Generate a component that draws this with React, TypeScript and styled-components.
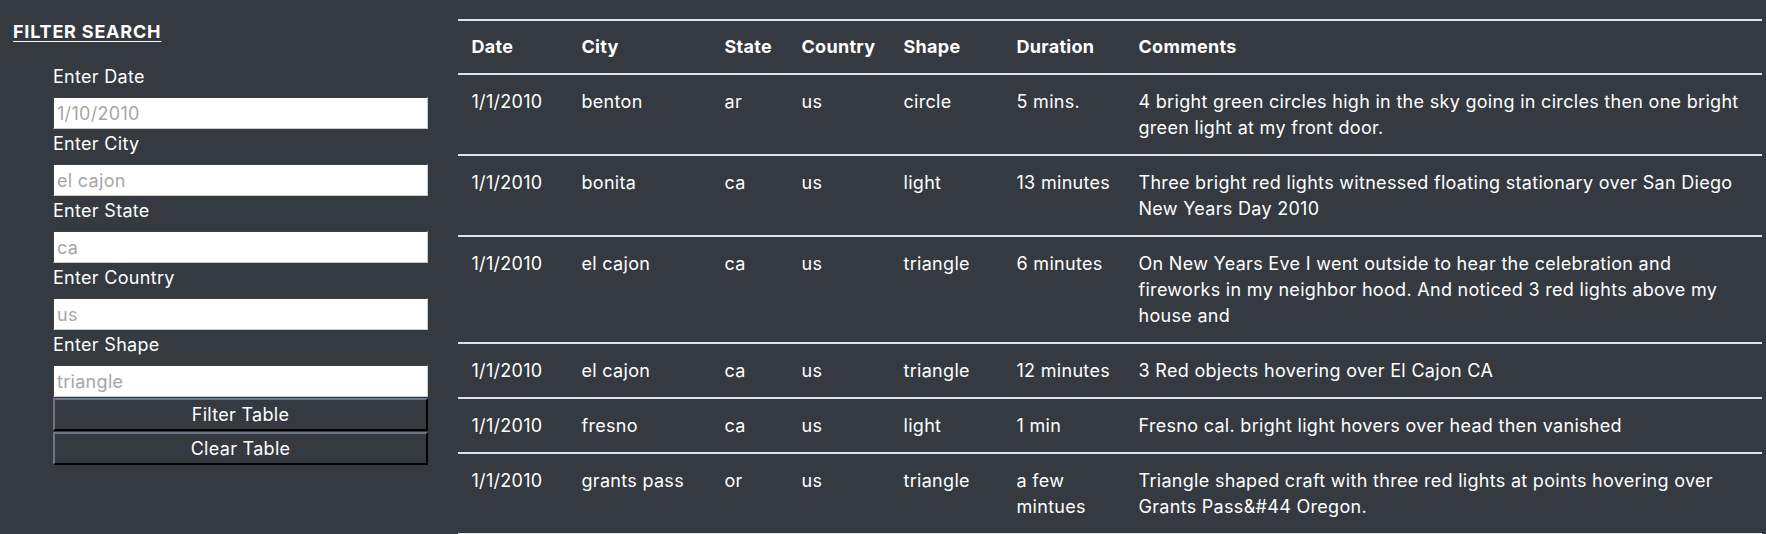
import React from "react";
import styled, { createGlobalStyle } from "styled-components";

const GlobalStyle = createGlobalStyle`
  html, body {
    margin: 0;
    padding: 0;
    background: #343a40;
  }
  body {
    font-family: Inter, "Liberation Sans", sans-serif;
    font-size: 18px;
    line-height: 27px;
    letter-spacing: 0.3px;
    color: #fff;
  }
`;

const Page = styled.div`
  display: grid;
  grid-template-columns: 441px 1fr;
  min-height: 534px;
  background: #343a40;
`;

const Sidebar = styled.aside`
  padding: 18px 0 0 13px;
`;

const Title = styled.h4`
  margin: 0;
  font-size: 18px;
  line-height: 27px;
  font-weight: 700;
  letter-spacing: 0.8px;
  text-decoration: underline;
  text-underline-offset: 3px;
`;

const Form = styled.form`
  margin: 18px 0 0 40px;
  width: 375px;
`;

const Label = styled.label`
  display: block;
  line-height: 27px;
  margin-bottom: 7px;
`;

const Input = styled.input`
  display: block;
  box-sizing: border-box;
  width: 100%;
  height: 32px;
  margin: 0 0 1px;
  padding: 1px 3px;
  font-family: inherit;
  font-size: 18px;
  letter-spacing: 0.3px;
  color: #222;
  background: #fff;
  border: 1px solid;
  border-color: #3b4046 #c8c8c8 #c8c8c8 #3b4046;
  outline: none;

  &::placeholder {
    color: #a7a7a7;
  }
`;

const Button = styled.button`
  display: block;
  box-sizing: border-box;
  width: 100%;
  height: 33px;
  margin: 0 0 1px;
  padding: 1px 6px;
  font-family: inherit;
  font-size: 18px;
  line-height: 27px;
  letter-spacing: 0.3px;
  color: #fff;
  background: #343a40;
  border: 2px solid;
  border-color: #6c7686 #000 #000 #6c7686;
  cursor: pointer;
`;

const Main = styled.main`
  padding: 19px 4px 0 17px;
`;

const Table = styled.table`
  width: 100%;
  table-layout: fixed;
  border-collapse: collapse;
`;

const HeadCell = styled.th`
  padding: 13px 13.5px;
  line-height: 26px;
  font-weight: 700;
  text-align: left;
  vertical-align: top;
  border-top: 2px solid #dee2e6;
  border-bottom: 2px solid #dee2e6;
`;

const Row = styled.tr`
  &:last-child td {
    border-bottom: 2px solid #dee2e6;
  }
`;

const Cell = styled.td`
  padding: 13.5px;
  line-height: 26px;
  vertical-align: top;
  border-top: 2px solid #dee2e6;
`;

const fields = [
  { label: "Enter Date", placeholder: "1/10/2010" },
  { label: "Enter City", placeholder: "el cajon" },
  { label: "Enter State", placeholder: "ca" },
  { label: "Enter Country", placeholder: "us" },
  { label: "Enter Shape", placeholder: "triangle" },
];

const columns = [
  { name: "Date", width: 110 },
  { name: "City", width: 143 },
  { name: "State", width: 77 },
  { name: "Country", width: 102 },
  { name: "Shape", width: 113 },
  { name: "Duration", width: 122 },
  { name: "Comments", width: undefined },
];

const sightings = [
  ["1/1/2010", "benton", "ar", "us", "circle", "5 mins.", "4 bright green circles high in the sky going in circles then one bright green light at my front door."],
  ["1/1/2010", "bonita", "ca", "us", "light", "13 minutes", "Three bright red lights witnessed floating stationary over San Diego New Years Day 2010"],
  ["1/1/2010", "el cajon", "ca", "us", "triangle", "6 minutes", "On New Years Eve I went outside to hear the celebration and fireworks in my neighbor hood. And noticed 3 red lights above my house and"],
  ["1/1/2010", "el cajon", "ca", "us", "triangle", "12 minutes", "3 Red objects hovering over El Cajon CA"],
  ["1/1/2010", "fresno", "ca", "us", "light", "1 min", "Fresno cal. bright light hovers over head then vanished"],
  ["1/1/2010", "grants pass", "or", "us", "triangle", "a few mintues", "Triangle shaped craft with three red lights at points hovering over Grants Pass&#44 Oregon."],
];

const App = () => {
  return (
    <Page>
      <GlobalStyle />
      <Sidebar>
        <Title>FILTER SEARCH</Title>
        <Form onSubmit={(e) => e.preventDefault()}>
          {fields.map((f) => (
            <div key={f.label}>
              <Label>{f.label}</Label>
              <Input type="text" placeholder={f.placeholder} />
            </div>
          ))}
          <Button type="button">Filter Table</Button>
          <Button type="button">Clear Table</Button>
        </Form>
      </Sidebar>
      <Main>
        <Table>
          <colgroup>
            {columns.map((c) => (
              <col key={c.name} style={c.width ? { width: c.width } : undefined} />
            ))}
          </colgroup>
          <thead>
            <tr>
              {columns.map((c) => (
                <HeadCell key={c.name}>{c.name}</HeadCell>
              ))}
            </tr>
          </thead>
          <tbody>
            {sightings.map((row, i) => (
              <Row key={i}>
                {row.map((v, j) => (
                  <Cell key={j}>{v}</Cell>
                ))}
              </Row>
            ))}
          </tbody>
        </Table>
      </Main>
    </Page>
  );
};

export default App;
